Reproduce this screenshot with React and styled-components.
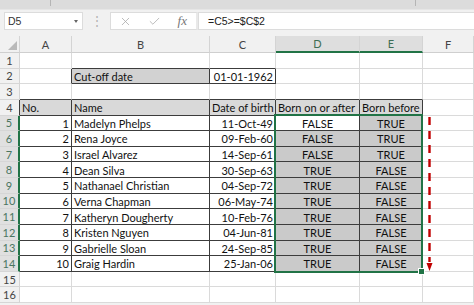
import React from 'react';
import styled, { createGlobalStyle } from 'styled-components';
import { X, Check } from 'lucide-react';

const GRID = '#dadada';
const DARK = '#3c3c3c';
const GREEN = '#217346';
const HEAD_FILL = '#d9d9d9';
const SEL_FILL = '#cacaca';

const GlobalStyle = createGlobalStyle`
  html, body {
    margin: 0;
    padding: 0;
    background: #fff;
  }
  body {
    width: 474px;
    height: 305px;
    overflow: hidden;
    font-family: Lato, "Liberation Sans", sans-serif;
  }
`;

const people = [
  [1, 'Madelyn Phelps', '11-Oct-49'],
  [2, 'Rena Joyce', '09-Feb-60'],
  [3, 'Israel Alvarez', '14-Sep-61'],
  [4, 'Dean Silva', '30-Sep-63'],
  [5, 'Nathanael Christian', '04-Sep-72'],
  [6, 'Verna Chapman', '06-May-74'],
  [7, 'Katheryn Dougherty', '10-Feb-76'],
  [8, 'Kristen Nguyen', '04-Jun-81'],
  [9, 'Gabrielle Sloan', '24-Sep-85'],
  [10, 'Graig Hardin', '25-Jan-06'],
];

const COLS = ['A', 'B', 'C', 'D', 'E', 'F'];
const ROWS = 16;
const SELECTED_COLS = ['D', 'E'];
const SELECTED_ROWS = [5, 14];

// build the sheet contents
const cells = {};
const put = (r, c, v) => { cells[`${r}-${c}`] = v; };

put(2, 2, { text: 'Cut-off date', fill: '#d2d2d2', border: true });
put(2, 3, { text: '01-01-1962', align: 'flex-end', border: true });
['No.', 'Name', 'Date of birth', 'Born on or after', 'Born before'].forEach((t, i) =>
  put(4, i + 1, { text: t, fill: HEAD_FILL, border: true })
);
people.forEach(([n, name, dob], i) => {
  const r = 5 + i;
  const yy = Number(dob.slice(-2));
  const year = yy < 30 ? 2000 + yy : 1900 + yy;
  const after = year >= 1962;
  put(r, 1, { text: n, align: 'flex-end', border: true });
  put(r, 2, { text: name, border: true });
  put(r, 3, { text: dob, align: 'flex-end', border: true });
  put(r, 4, { text: after ? 'TRUE' : 'FALSE', align: 'center', border: true, fill: r === 5 ? null : SEL_FILL });
  put(r, 5, { text: after ? 'FALSE' : 'TRUE', align: 'center', border: true, fill: SEL_FILL });
});

const bordered = (r, c) => !!(cells[`${r}-${c}`] && cells[`${r}-${c}`].border);

function App() {
  const rows = [];
  for (let r = 1; r <= ROWS; r++) rows.push(r);

  return (
    <>
      <GlobalStyle />
      <Screen>
        <TopStrip>
          <Tick $left={50} />
          <Tick $left={364} />
        </TopStrip>
        <FormulaBar>
          <NameBox>
            D5
            <Caret />
          </NameBox>
          <Grip>⋮</Grip>
          <FxBox>
            <X size={13} strokeWidth={1.4} color="#a8a8a8" />
            <Check size={13} strokeWidth={1.4} color="#a8a8a8" />
            <Fx>fx</Fx>
          </FxBox>
          <Input>=C5&gt;=$C$2</Input>
        </FormulaBar>

        <Sheet>
          <Corner>
            <svg width="9" height="9" viewBox="0 0 9 9">
              <polygon points="9,0 9,9 0,9" fill="#b9b9b9" />
            </svg>
          </Corner>
          {COLS.map((col, i) => (
            <ColHead key={col} $col={i + 2} $sel={SELECTED_COLS.includes(col)}>
              {col}
            </ColHead>
          ))}

          {rows.map((r) => {
            const sel = r >= SELECTED_ROWS[0] && r <= SELECTED_ROWS[1];
            return (
              <React.Fragment key={r}>
                <RowHead $row={r + 1} $sel={sel} $dark={bordered(r, 1)}>
                  {r}
                </RowHead>
                {COLS.map((col, ci) => {
                  const c = ci + 1;
                  const cell = cells[`${r}-${c}`] || {};
                  return (
                    <Cell
                      key={col}
                      $row={r + 1}
                      $col={c + 1}
                      $fill={cell.fill}
                      $align={cell.align}
                      $br={bordered(r, c) || bordered(r, c + 1)}
                      $bb={bordered(r, c) || bordered(r + 1, c)}
                    >
                      {cell.text}
                    </Cell>
                  );
                })}
              </React.Fragment>
            );
          })}

          <Selection />
          <ArrowSlot>
            <svg width="7" height="157" viewBox="0 0 7 157">
              <line x1="3.5" y1="1" x2="3.5" y2="146" stroke="#c00000" strokeWidth="2.4" strokeDasharray="8 6" />
              <polygon points="0.5,147 6.5,147 3.5,155" fill="#c00000" />
            </svg>
          </ArrowSlot>
        </Sheet>
      </Screen>
    </>
  );
}

const Screen = styled.div`
  width: 474px;
  height: 305px;
  background: #f1f1f1;
  display: flex;
  flex-direction: column;
  overflow: hidden;
`;

const TopStrip = styled.div`
  height: 9px;
  background: #dcdcdc;
  border-bottom: 1px solid #e6e6e6;
  display: flex;
`;

const Tick = styled.div`
  margin-left: ${(p) => p.$left}px;
  width: 1px;
  height: 6px;
  background: #b5b5b5;
`;

const FormulaBar = styled.div`
  height: 18px;
  margin-top: 2px;
  display: flex;
  align-items: stretch;
  padding-left: 4px;
  font-family: "Liberation Sans", Arial, sans-serif;
`;

const NameBox = styled.div`
  width: 79px;
  box-sizing: border-box;
  background: #fff;
  border: 1px solid #dcdcdc;
  display: flex;
  align-items: center;
  justify-content: space-between;
  padding: 0 4px 0 3px;
  font-size: 10.5px;
  color: #333;
`;

const Caret = styled.span`
  width: 0;
  height: 0;
  border-left: 2.5px solid transparent;
  border-right: 2.5px solid transparent;
  border-top: 3px solid #666;
`;

const Grip = styled.div`
  width: 27px;
  display: flex;
  align-items: center;
  justify-content: center;
  color: #b0b0b0;
  font-size: 12px;
  line-height: 1;
`;

const FxBox = styled.div`
  width: 88px;
  box-sizing: border-box;
  background: #fff;
  border: 1px solid #dcdcdc;
  border-right: 2px solid #e9e9e9;
  display: flex;
  align-items: center;
  justify-content: space-between;
  padding: 0 9px 0 8px;
`;

const Fx = styled.span`
  font-family: "Liberation Serif", "Times New Roman", serif;
  font-style: italic;
  font-size: 13px;
  color: #777;
`;

const Input = styled.div`
  flex: 1;
  background: #fff;
  border: 1px solid #dcdcdc;
  border-right: none;
  display: flex;
  align-items: center;
  padding-left: 9px;
  font-size: 10.5px;
  color: #222;
`;

const Sheet = styled.div`
  margin-top: 6px;
  display: grid;
  grid-template-columns: 20px 52px 138px 66px 84px 63px 1fr;
  grid-template-rows: 17px repeat(${ROWS}, 15.64px);
  background: #fff;
  font-family: Lato, "Liberation Sans", sans-serif;
`;

const Corner = styled.div`
  grid-row: 1;
  grid-column: 1;
  background: #f1f1f1;
  border-right: 1px solid #d4d4d4;
  border-bottom: 1px solid #cfcfcf;
  display: flex;
  align-items: flex-end;
  justify-content: flex-end;
  padding: 0 2px 2px 0;
`;

const ColHead = styled.div`
  grid-row: 1;
  grid-column: ${(p) => p.$col};
  background: ${(p) => (p.$sel ? '#dedede' : '#f1f1f1')};
  border-right: 1px solid #d4d4d4;
  border-bottom: ${(p) => (p.$sel ? `2px solid ${GREEN}` : '1px solid #cfcfcf')};
  display: flex;
  align-items: center;
  justify-content: center;
  font-size: 11px;
  color: ${(p) => (p.$sel ? '#3f6e55' : '#444')};
`;

const RowHead = styled.div`
  grid-row: ${(p) => p.$row};
  grid-column: 1;
  background: ${(p) => (p.$sel ? '#e0e0e0' : '#f1f1f1')};
  border-right: ${(p) => (p.$sel ? `2px solid ${GREEN}` : p.$dark ? `1px solid ${DARK}` : '1px solid #d4d4d4')};
  border-bottom: 1px solid #d6d6d6;
  display: flex;
  align-items: center;
  justify-content: center;
  font-size: 11px;
  color: ${(p) => (p.$sel ? '#4a7560' : '#444')};
`;

const Cell = styled.div`
  grid-row: ${(p) => p.$row};
  grid-column: ${(p) => p.$col};
  min-width: 0;
  box-sizing: border-box;
  background: ${(p) => p.$fill || '#fff'};
  border-right: 1px solid ${(p) => (p.$br ? DARK : GRID)};
  border-bottom: 1px solid ${(p) => (p.$bb ? DARK : GRID)};
  display: flex;
  align-items: center;
  justify-content: ${(p) => p.$align || 'flex-start'};
  padding: 1px 2px 0;
  font-size: 11px;
  color: #111;
  white-space: nowrap;
  overflow: hidden;
`;

const Selection = styled.div`
  grid-row: ${SELECTED_ROWS[0] + 1} / ${SELECTED_ROWS[1] + 2};
  grid-column: 5 / 7;
  margin: -2px 0 -1px -2px;
  border: 2px solid ${GREEN};
  pointer-events: none;
  position: relative;

  &::after {
    content: '';
    position: absolute;
    right: -4px;
    bottom: -4px;
    width: 5px;
    height: 5px;
    background: ${GREEN};
    border: 1px solid #fff;
  }
`;

const ArrowSlot = styled.div`
  grid-row: ${SELECTED_ROWS[0] + 1} / ${SELECTED_ROWS[1] + 2};
  grid-column: 7;
  justify-self: start;
  margin-left: 3px;
  display: flex;
`;

export default App;
